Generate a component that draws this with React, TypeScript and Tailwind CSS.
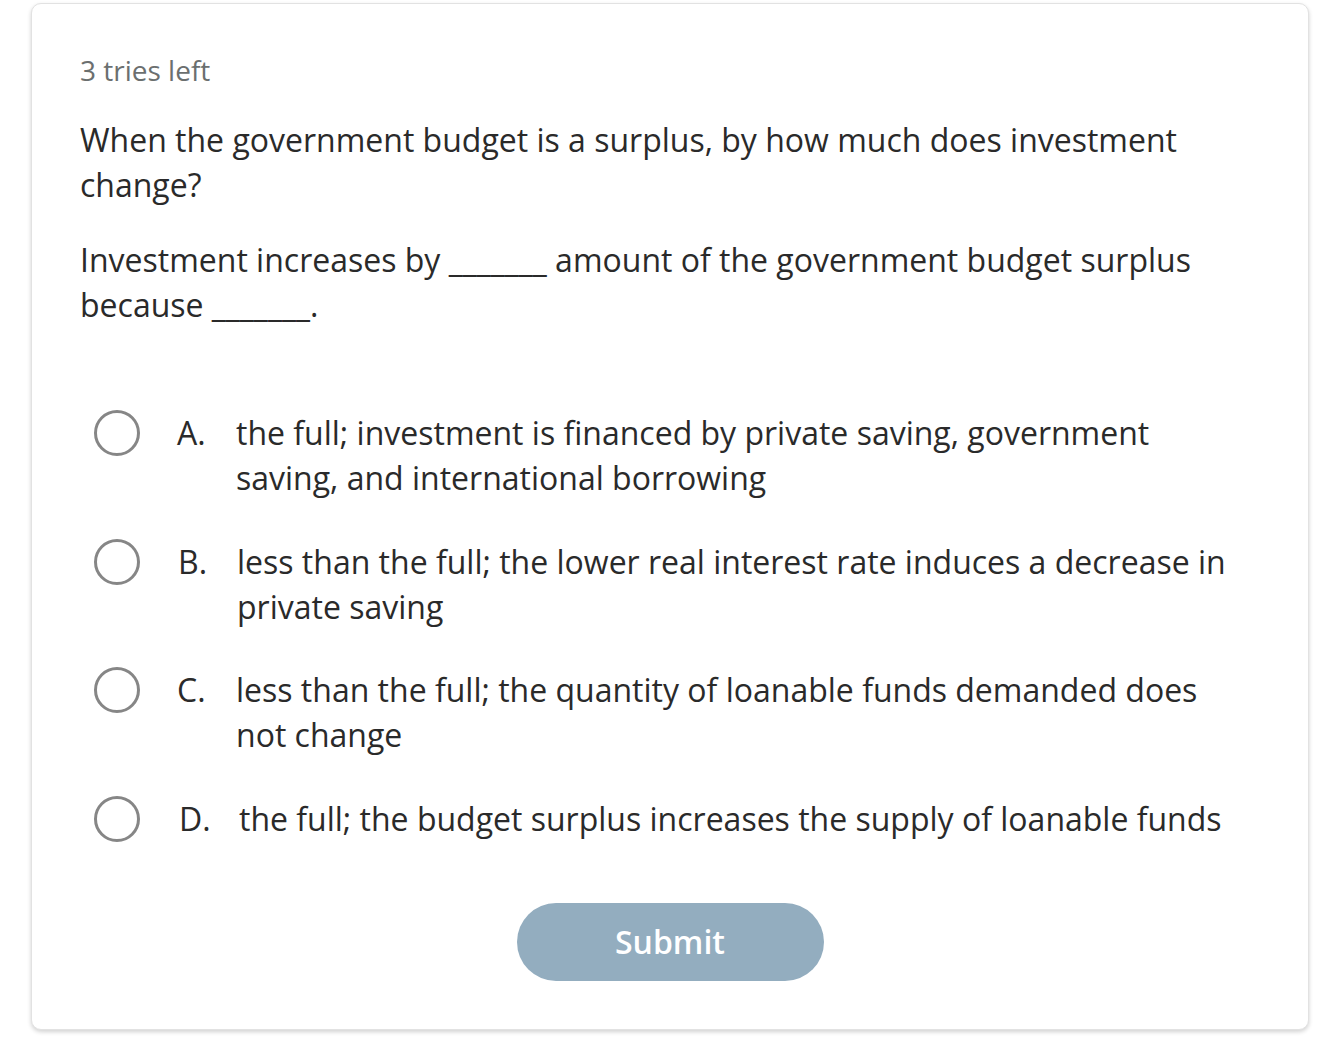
const options = [
  { letter: 'A.', text: 'the full; investment is financed by private saving, government saving, and international borrowing', shift: 'ml-[37px] w-[59px]' },
  { letter: 'B.', text: 'less than the full; the lower real interest rate induces a decrease in private saving', shift: 'ml-[38px] w-[59px]' },
  { letter: 'C.', text: 'less than the full; the quantity of loanable funds demanded does not change', shift: 'ml-[37px] w-[59px]' },
  { letter: 'D.', text: 'the full; the budget surplus increases the supply of loanable funds', shift: 'ml-[39px] w-[60px]' },
];

export default function App() {
  return (
    <div className="min-h-screen bg-white pl-[31px] pt-[3px] pb-[24px]" style={{ fontFamily: '"Open Sans", "Liberation Sans", sans-serif' }}>
      <div className="w-[1278px] rounded-[10px] border border-[#e2e2e2] bg-white px-[48px] pt-[47px] pb-[48px] shadow-[0_2px_4px_rgba(0,0,0,0.18)]">
        <p className="text-[28px] leading-[38px] text-[#6b6f6f]">3 tries left</p>

        <p className="mt-[28px] text-[32px] leading-[45px] text-[#2a2a2a]">
          When the government budget is a surplus, by how much does investment change?
        </p>

        <p className="mt-[30px] text-[32px] leading-[45px] text-[#2a2a2a]">
          Investment increases by _______ amount of the government budget surplus because _______.
        </p>

        <div className="mt-[83px] flex flex-col gap-[38.5px]">
          {options.map((o) => (
            <div key={o.letter} className="flex items-start">
              <span className="ml-[14px] h-[46px] w-[46px] shrink-0 rounded-full border-[3.5px] border-[#868686]" />
              <span className={`${o.shift} shrink-0 text-[32px] leading-[45px] text-[#2a2a2a]`}>{o.letter}</span>
              <span className="w-[994px] text-[32px] leading-[45px] text-[#2a2a2a]">{o.text}</span>
            </div>
          ))}
        </div>

        <div className="mt-[61px] flex justify-center">
          <button className="h-[78px] w-[307px] rounded-full bg-[#93adbf] text-[32px] font-semibold text-white">
            Submit
          </button>
        </div>
      </div>
    </div>
  );
}
